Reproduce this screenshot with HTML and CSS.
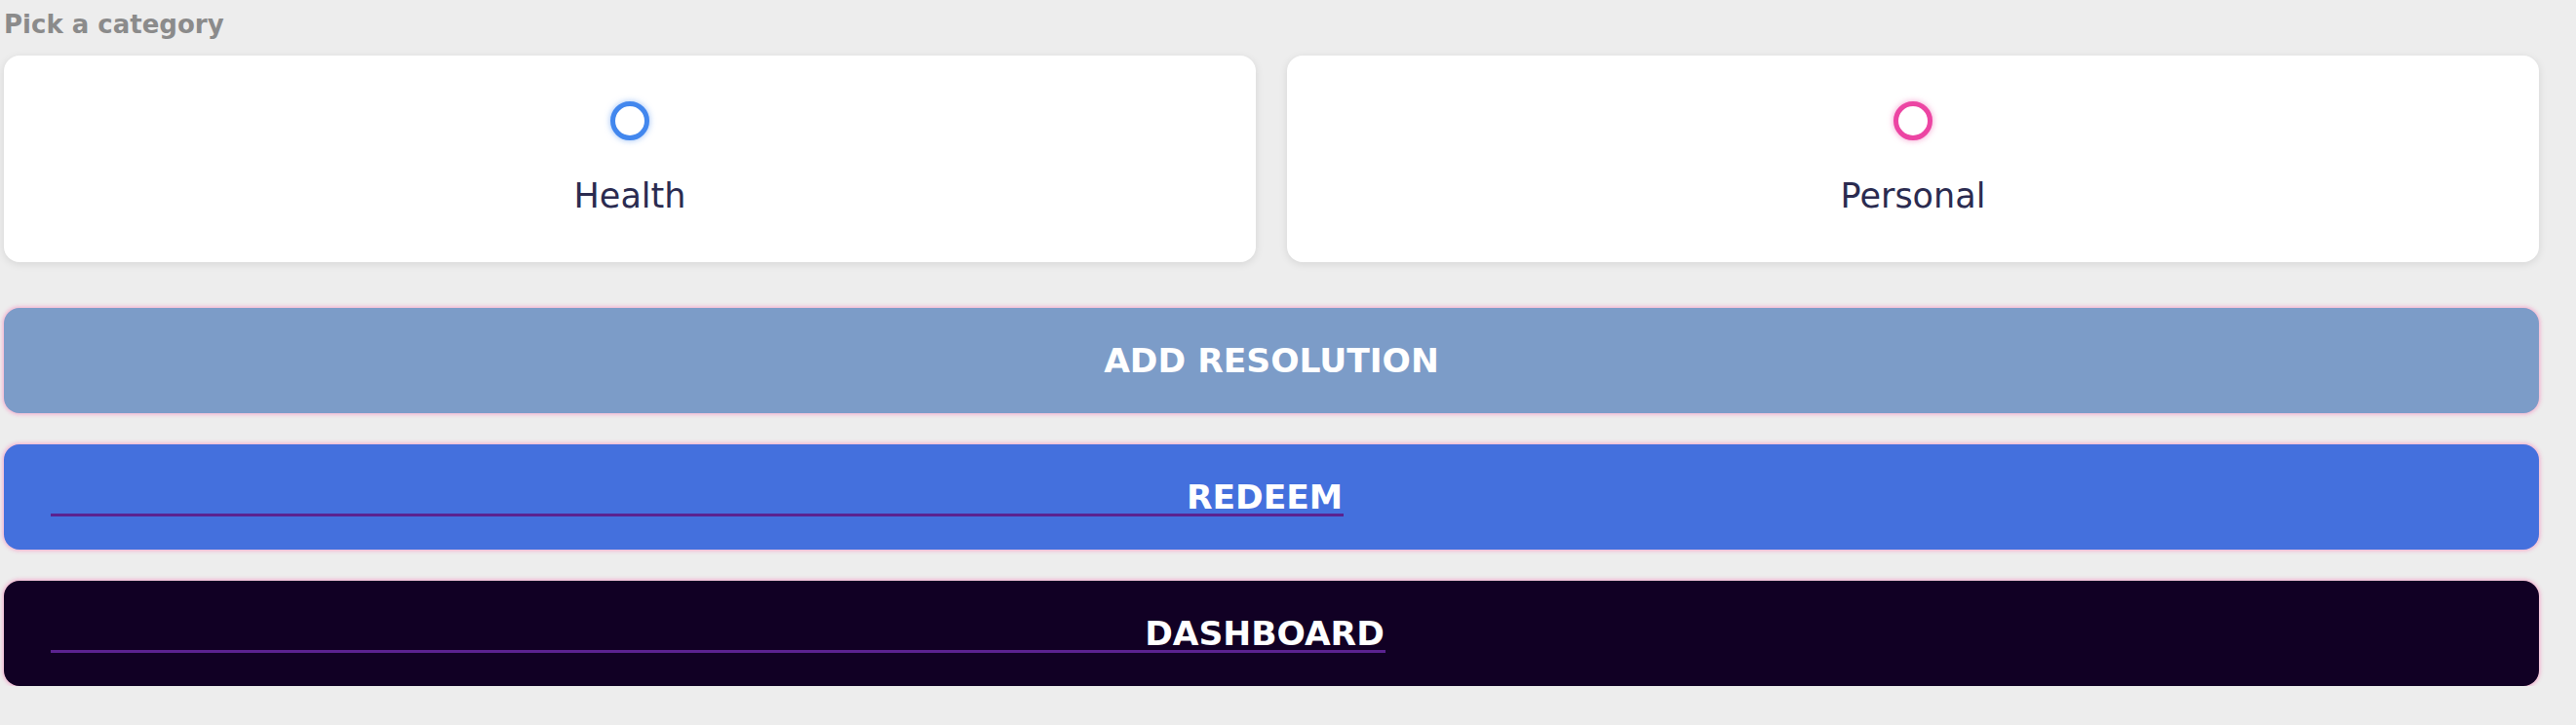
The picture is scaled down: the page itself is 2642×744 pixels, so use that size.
FILE: index.html
```html
<!DOCTYPE html>
<html lang="en">
<head>
<meta charset="utf-8">
<title>Pick a category</title>
<link rel="stylesheet" href="styles.css">
</head>
<body>
<main class="page">
  <h2 class="label">Pick a category</h2>
  <div class="cards">
    <label class="card">
      <span class="radio radio-blue"></span>
      <span class="card-name">Health</span>
    </label>
    <label class="card">
      <span class="radio radio-pink"></span>
      <span class="card-name">Personal</span>
    </label>
  </div>
  <div class="actions">
    <button class="btn btn-add"><span class="btn-text">ADD RESOLUTION</span></button>
    <a class="btn btn-redeem"><span class="btn-text link">REDEEM</span></a>
    <a class="btn btn-dash"><span class="btn-text link">DASHBOARD</span></a>
  </div>
</main>
</body>
</html>
```

FILE: styles.css
```css
* { box-sizing: border-box; }
html, body { margin: 0; padding: 0; }
body {
  background: #ededed;
  font-family: "DejaVu Sans", "Noto Sans", sans-serif;
}
.page {
  width: 2600px;
  margin-left: 4px;
  padding-top: 8px;
  display: flex;
  flex-direction: column;
}
.label {
  margin: 0;
  height: 49px;
  font-size: 26px;
  line-height: 34px;
  font-weight: 700;
  color: #8b8b8b;
}
.cards {
  display: grid;
  grid-template-columns: 1fr 1fr;
  gap: 32px;
}
.card {
  height: 212px;
  background: #fff;
  border-radius: 16px;
  box-shadow: 0 2px 8px rgba(0,0,0,0.10);
  display: flex;
  flex-direction: column;
  align-items: center;
  padding-top: 47px;
}
.radio {
  width: 40px;
  height: 40px;
  border-radius: 50%;
  border: 5px solid;
  background: #fff;
}
.radio-blue { border-color: #4287ee; box-shadow: 0 0 6px rgba(66,135,238,0.55); }
.radio-pink { border-color: #ec45a3; box-shadow: 0 0 6px rgba(236,69,163,0.55); }
.card-name {
  margin-top: 37px;
  font-size: 35px;
  line-height: 40px;
  color: #2b2b50;
}
.actions {
  margin-top: 47px;
  display: flex;
  flex-direction: column;
  gap: 32px;
}
.btn {
  height: 108px;
  border: none;
  border-radius: 16px;
  box-shadow: 0 0 4px 1px rgba(244,160,200,0.9);
  display: flex;
  align-items: center;
  justify-content: center;
  position: relative;
  font-family: inherit;
  color: #fff;
  cursor: pointer;
}
.btn-add { background: #7c9cc8; width: 100%; padding: 0; }
.btn-redeem { background: #4470dd; }
.btn-dash { background: #110024; }
.btn-text {
  font-size: 34.5px;
  line-height: 1;
  font-weight: 700;
  color: #fff;
}
.link {
  position: relative;
  display: inline-block;
  margin-right: 14px;
}
.link::after {
  content: "";
  position: absolute;
  left: calc(50% - 1245px);
  right: -1px;
  bottom: -3px;
  height: 3px;
  background: #5b2290;
}
```
